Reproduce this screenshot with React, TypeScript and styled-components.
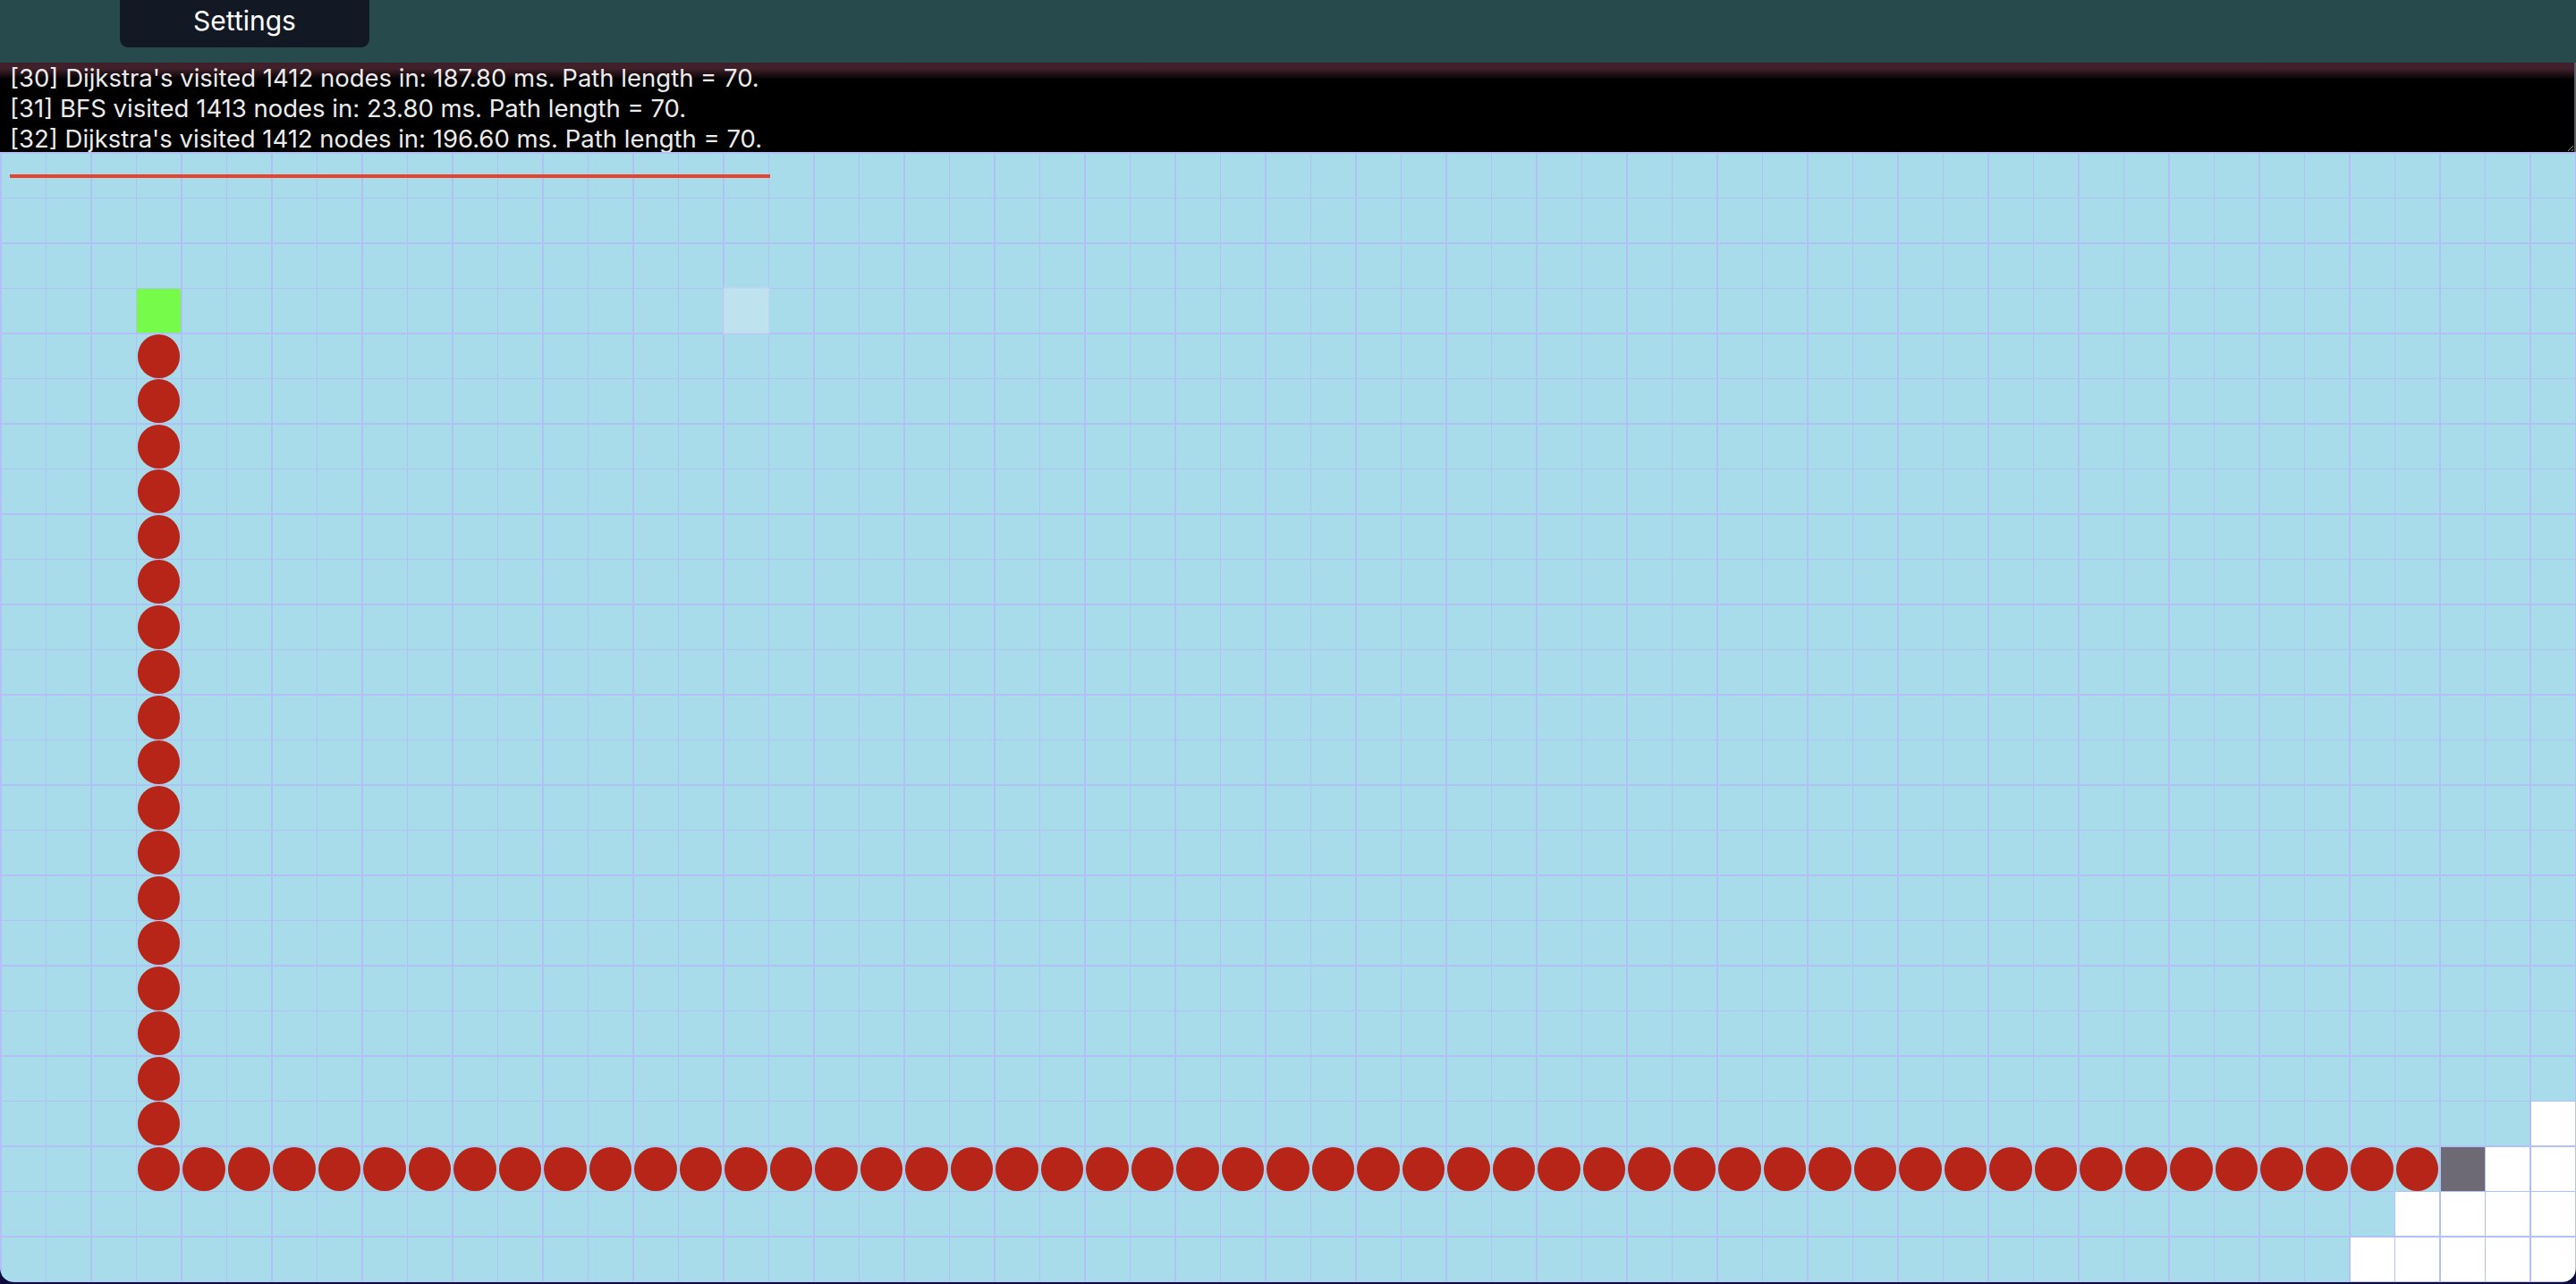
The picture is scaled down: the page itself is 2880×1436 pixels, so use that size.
import React from "react";
import styled, { createGlobalStyle } from "styled-components";

const COLS = 57;
const ROWS = 25;

type Kind = "visited" | "unvisited" | "start" | "end" | "hover" | "path";

const GlobalStyle = createGlobalStyle`
  html, body {
    margin: 0;
    padding: 0;
    background: #0f0c3e;
  }
  body {
    font-family: Inter, "Noto Sans", "Liberation Sans", sans-serif;
  }
  * { box-sizing: border-box; }
`;

const Shell = styled.div`
  display: flex;
  flex-direction: column;
  width: 100%;
  border-radius: 0 0 16px 16px;
  overflow: hidden;
`;

const Header = styled.header`
  height: 70px;
  background: #274a4d;
  display: flex;
  align-items: flex-start;
  padding-left: 134px;
`;

const SettingsButton = styled.button`
  width: 279px;
  height: 53px;
  border: none;
  background: #121925;
  color: #ffffff;
  font-family: Inter, "Noto Sans", sans-serif;
  font-size: 30px;
  font-weight: 400;
  border-radius: 0 0 9px 9px;
  padding: 0 0 8px 0;
  cursor: pointer;
`;

const Log = styled.textarea`
  display: block;
  width: 100%;
  height: 100px;
  margin: 0;
  border: none;
  border-right: 2px solid #5e5e66;
  background: linear-gradient(#40202a 0px, #40202a 7px, #000000 19px);
  color: #ecebec;
  font-family: Inter, "Noto Sans", sans-serif;
  font-size: 27.5px;
  line-height: 34px;
  padding: 0 11px;
  resize: vertical;
  outline: none;
  overflow: hidden;
`;

const Board = styled.div`
  position: relative;
  display: grid;
  grid-template-columns: repeat(${COLS}, 1fr);
  gap: 1.6px;
  padding: 1.6px;
  background: #b1c0f5;
`;

const Progress = styled.div`
  position: absolute;
  top: 25px;
  left: 11px;
  width: 850px;
  height: 4px;
  background: #e8432b;
`;

const cellBg: Record<Kind, string> = {
  visited: "#a8dcea",
  unvisited: "#ffffff",
  start: "#76fb4b",
  end: "#6e6a75",
  hover: "#bee3ef",
  path: "#a8dcea",
};

const Cell = styled.div<{ $kind: Kind }>`
  aspect-ratio: 1 / 1;
  background: ${(p) => cellBg[p.$kind]};
  display: flex;
  align-items: center;
  justify-content: center;
  ${(p) => (p.$kind === "hover" ? "box-shadow: 0 0 0 1.5px #c6d3f6;" : "")}
`;

const Dot = styled.div`
  width: 97.5%;
  height: 100%;
  border-radius: 50%;
  background: #b72519;
`;

const whiteCells = new Set<string>([
  "21-56",
  "22-55",
  "22-56",
  "23-53",
  "23-54",
  "23-55",
  "23-56",
  "24-52",
  "24-53",
  "24-54",
  "24-55",
  "24-56",
]);

function kindOf(r: number, c: number): Kind {
  if (r === 3 && c === 3) return "start";
  if (r === 22 && c === 54) return "end";
  if (r === 3 && c === 16) return "hover";
  if (c === 3 && r >= 4 && r <= 22) return "path";
  if (r === 22 && c >= 4 && c <= 53) return "path";
  if (whiteCells.has(`${r}-${c}`)) return "unvisited";
  return "visited";
}

const logText = [
  "[30] Dijkstra's visited 1412 nodes in: 187.80 ms. Path length = 70.",
  "[31] BFS visited 1413 nodes in: 23.80 ms. Path length = 70.",
  "[32] Dijkstra's visited 1412 nodes in: 196.60 ms. Path length = 70.",
].join("\n");

export default function App() {
  const cells: React.ReactNode[] = [];
  for (let r = 0; r < ROWS; r++) {
    for (let c = 0; c < COLS; c++) {
      const k = kindOf(r, c);
      cells.push(
        <Cell key={`${r}-${c}`} $kind={k}>
          {k === "path" ? <Dot /> : null}
        </Cell>
      );
    }
  }
  return (
    <>
      <GlobalStyle />
      <Shell>
        <Header>
          <SettingsButton>Settings</SettingsButton>
        </Header>
        <Log readOnly value={logText} />
        <Board>
          <Progress />
          {cells}
        </Board>
      </Shell>
    </>
  );
}
